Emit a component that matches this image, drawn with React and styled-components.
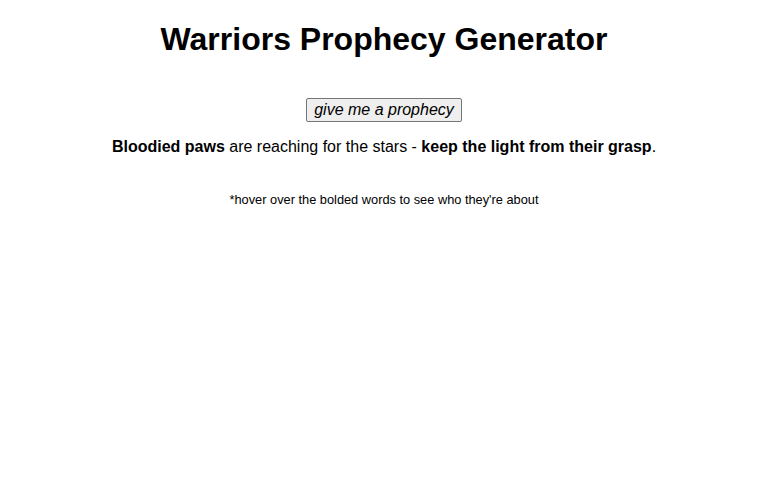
import React from "react";
import styled, { createGlobalStyle } from "styled-components";

const GlobalStyle = createGlobalStyle`
  body {
    margin: 0;
    background: #fff;
    font-family: "Liberation Sans", Arial, sans-serif;
    color: #000;
  }
`;

const Page = styled.div`
  text-align: center;
  padding-top: 21px;
`;

const Title = styled.h1`
  font-size: 32px;
  font-weight: bold;
  margin: 0 0 40px;
`;

const ProphecyButton = styled.button`
  font-family: "Liberation Sans", Arial, sans-serif;
  font-size: 16px;
  font-style: italic;
  color: #000;
  background: #efefef;
  border: 1px solid #767676;
  border-radius: 2px;
  padding: 1px 7px;
  height: 24px;
  cursor: pointer;
`;

const Prophecy = styled.p`
  font-size: 16px;
  margin: 16px 0 0;
`;

const Hint = styled.p`
  font-size: 12.8px;
  margin: 36px 0 0;
`;

export default function App() {
  return (
    <Page>
      <GlobalStyle />
      <Title>Warriors Prophecy Generator</Title>
      <ProphecyButton>give me a prophecy</ProphecyButton>
      <Prophecy>
        <b>Bloodied paws</b> are reaching for the stars - <b>keep the light from their grasp</b>.
      </Prophecy>
      <Hint>*hover over the bolded words to see who they're about</Hint>
    </Page>
  );
}
